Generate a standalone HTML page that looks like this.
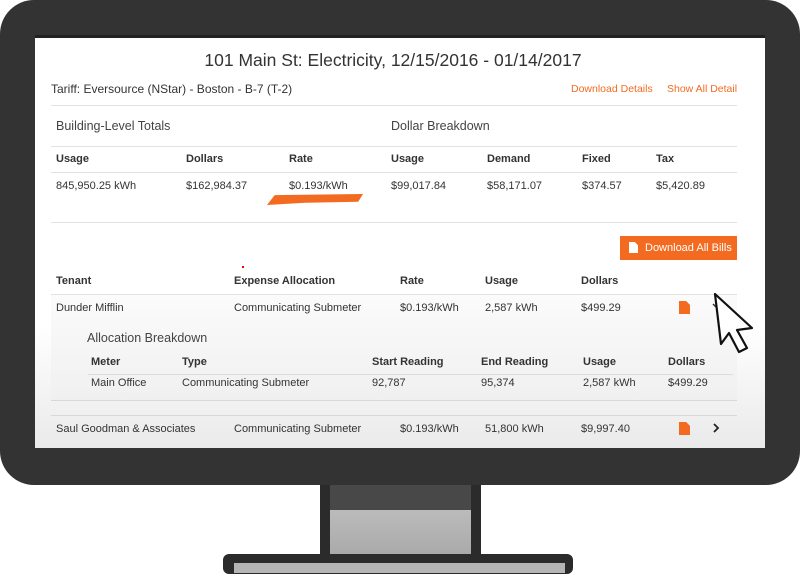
<!DOCTYPE html>
<html><head><style>
*{margin:0;padding:0;box-sizing:border-box}
body{width:800px;height:570px;background:#fff;position:relative;overflow:hidden;font-family:"Liberation Sans",sans-serif;color:#333}
.a{position:absolute;white-space:nowrap}
.t{font-size:11px;color:#333}
.h{font-size:11px;font-weight:bold;color:#333}
.ln{position:absolute;height:1px;background:#e2e2e2}
.or{color:#f26b21;font-size:10.5px}
.doc{position:absolute;width:11px;height:13px;background:#f26b21;clip-path:polygon(0 0,65% 0,100% 30%,100% 100%,0 100%)}
</style></head><body>
<div class="a" style="left:0;top:0;width:800px;height:485px;background:#333;border-radius:34px"></div>
<div class="a" style="left:320px;top:485px;width:161px;height:72px;background:#2b2b2b"></div>
<div class="a" style="left:330px;top:485px;width:141px;height:25px;background:#484848"></div>
<div class="a" style="left:330px;top:510px;width:141px;height:44px;background:linear-gradient(#bbb,#aaa)"></div>
<div class="a" style="left:223px;top:554px;width:350px;height:20px;background:#2b2b2b;border-radius:6px"></div>
<div class="a" style="left:234px;top:563px;width:331px;height:10px;background:#b5b5b5"></div>
<div class="a" style="left:35px;top:35px;width:730px;height:413px;background:linear-gradient(#fff 0,#fff 290px,#f3f3f3 360px,#eaeaea 413px)"></div>
<div class="a" style="left:35px;top:35px;width:730px;height:3px;background:#222"></div>

<div class="a" style="left:0;width:786px;text-align:center;top:50px;font-size:17.5px;color:#333">101 Main St: Electricity, 12/15/2016 - 01/14/2017</div>
<div class="a" style="left:51px;top:82px;font-size:12px">Tariff: Eversource (NStar) - Boston - B-7 (T-2)</div>
<div class="a or" style="left:571px;top:83px">Download Details</div>
<div class="a or" style="left:667px;top:83px">Show All Detail</div>
<div class="ln" style="left:51px;top:105px;width:686px"></div>
<div class="a" style="left:56px;top:119px;font-size:12.5px;color:#444">Building-Level Totals</div>
<div class="a" style="left:391px;top:119px;font-size:12.5px;color:#444">Dollar Breakdown</div>
<div class="ln" style="left:51px;top:146px;width:686px"></div>
<div class="a h" style="left:56px;top:153px">Usage</div>
<div class="a h" style="left:186px;top:153px">Dollars</div>
<div class="a h" style="left:289px;top:153px">Rate</div>
<div class="a h" style="left:391px;top:153px">Usage</div>
<div class="a h" style="left:487px;top:153px">Demand</div>
<div class="a h" style="left:582px;top:153px">Fixed</div>
<div class="a h" style="left:656px;top:153px">Tax</div>
<div class="ln" style="left:51px;top:172px;width:686px"></div>
<div class="a t" style="left:56px;top:180px">845,950.25 kWh</div>
<div class="a t" style="left:186px;top:180px">$162,984.37</div>
<div class="a t" style="left:289px;top:180px">$0.193/kWh</div>
<div class="a t" style="left:391px;top:180px">$99,017.84</div>
<div class="a t" style="left:487px;top:180px">$58,171.07</div>
<div class="a t" style="left:582px;top:180px">$374.57</div>
<div class="a t" style="left:656px;top:180px">$5,420.89</div>
<div class="a" style="left:267px;top:194px;width:96px;height:11px;background:#f26b21;clip-path:polygon(8% 10%,100% 0,95% 70%,40% 80%,0 100%)"></div>
<div class="ln" style="left:51px;top:222px;width:686px"></div>
<div class="a" style="left:620px;top:236px;width:117px;height:24px;background:#f26b21;color:#fff;font-size:11px;line-height:24px;padding-left:25px">Download All Bills</div>
<div class="a" style="left:629px;top:242px;width:9px;height:11px;background:#fff;clip-path:polygon(0 0,65% 0,100% 30%,100% 100%,0 100%)"></div>
<div class="a" style="left:242px;top:266px;width:2px;height:2px;background:#e00"></div>
<div class="a h" style="left:56px;top:275px">Tenant</div>
<div class="a h" style="left:234px;top:275px">Expense Allocation</div>
<div class="a h" style="left:400px;top:275px">Rate</div>
<div class="a h" style="left:485px;top:275px">Usage</div>
<div class="a h" style="left:581px;top:275px">Dollars</div>
<div class="ln" style="left:51px;top:294px;width:686px"></div>
<div class="a" style="left:51px;top:295px;width:686px;height:105px;background:linear-gradient(#fbfbfb,#f0f0f0)"></div>
<div class="a t" style="left:56px;top:302px">Dunder Mifflin</div>
<div class="a t" style="left:234px;top:302px">Communicating Submeter</div>
<div class="a t" style="left:400px;top:302px">$0.193/kWh</div>
<div class="a t" style="left:485px;top:302px">2,587 kWh</div>
<div class="a t" style="left:581px;top:302px">$499.29</div>
<div class="doc" style="left:679px;top:301px"></div>
<div class="a" style="left:87px;top:331px;font-size:12.5px;color:#444">Allocation Breakdown</div>
<div class="a h" style="left:91px;top:356px">Meter</div>
<div class="a h" style="left:182px;top:356px">Type</div>
<div class="a h" style="left:372px;top:356px">Start Reading</div>
<div class="a h" style="left:481px;top:356px">End Reading</div>
<div class="a h" style="left:583px;top:356px">Usage</div>
<div class="a h" style="left:668px;top:356px">Dollars</div>
<div class="ln" style="left:88px;top:374px;width:645px;background:#ddd"></div>
<div class="a t" style="left:91px;top:377px">Main Office</div>
<div class="a t" style="left:182px;top:377px">Communicating Submeter</div>
<div class="a t" style="left:372px;top:377px">92,787</div>
<div class="a t" style="left:481px;top:377px">95,374</div>
<div class="a t" style="left:583px;top:377px">2,587 kWh</div>
<div class="a t" style="left:668px;top:377px">$499.29</div>
<div class="ln" style="left:51px;top:400px;width:686px;background:#d8d8d8"></div>
<div class="ln" style="left:51px;top:415px;width:686px;background:#d8d8d8"></div>
<div class="a t" style="left:56px;top:423px">Saul Goodman &amp; Associates</div>
<div class="a t" style="left:234px;top:423px">Communicating Submeter</div>
<div class="a t" style="left:400px;top:423px">$0.193/kWh</div>
<div class="a t" style="left:485px;top:423px">51,800 kWh</div>
<div class="a t" style="left:581px;top:423px">$9,997.40</div>
<div class="doc" style="left:679px;top:422px"></div>
<svg class="a" style="left:710px;top:420px" width="12" height="16"><path d="M4 4l4 4-4 4" stroke="#222" stroke-width="1.8" fill="none"/></svg>
<svg class="a" style="left:710px;top:300px" width="20" height="14"><path d="M3 4l5 5 5-5" stroke="#333" stroke-width="1.5" fill="none"/></svg>
<svg class="a" style="left:708px;top:288px" width="50" height="70"><path d="M7 6 L13 56 L21 45 L31 64 L39 60 L29 42 L44 40 Z" fill="#fff" stroke="#111" stroke-width="2.2" stroke-linejoin="round"/></svg>
</body></html>
